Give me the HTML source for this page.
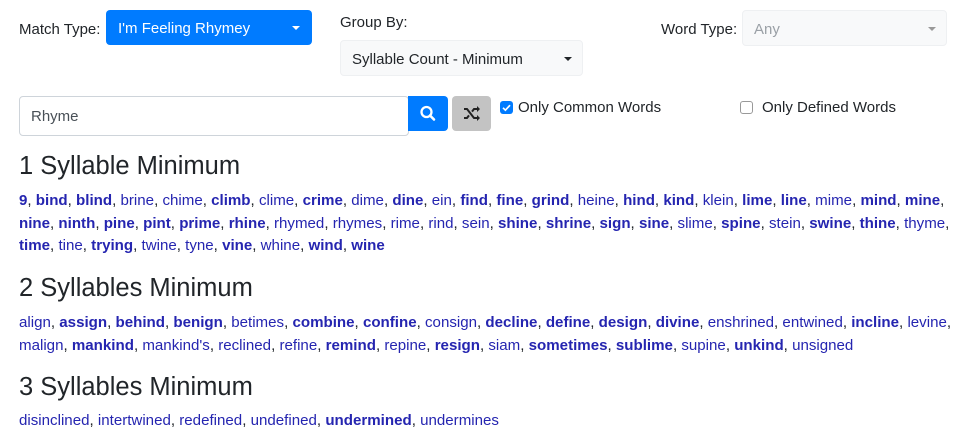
<!DOCTYPE html>
<html><head><meta charset="utf-8"><style>
body{margin:0;width:960px;height:439px;overflow:hidden;background:#fff;font-family:"Liberation Sans",Arial,sans-serif;color:#212529;position:relative}
.a{position:absolute}
.lbl{font-size:15px;white-space:nowrap}
.sel{border-radius:4px;font-size:15px;box-sizing:border-box;white-space:nowrap}
.caret{position:absolute;width:0;height:0;border-left:4px solid transparent;border-right:4px solid transparent;border-top:4px solid}
h2{font-weight:400;font-size:25.5px;margin:0;position:absolute;left:19px;color:#212529;white-space:nowrap}
.w{position:absolute;left:19px;width:945px;font-size:15.1px;line-height:22.5px;color:#212529;white-space:nowrap}
.w a{color:#2525b0;text-decoration:none}
.w b{color:#2525b0}
</style></head><body>
<div class="a lbl" style="left:19px;top:21px">Match Type:</div>
<div class="a sel" style="left:106px;top:10px;width:206px;height:35px;background:#007bff;color:#fff;padding:10px 12px">I'm Feeling Rhymey<span class="caret" style="left:186px;top:16px;color:#fff"></span></div>
<div class="a lbl" style="left:340px;top:14px">Group By:</div>
<div class="a sel" style="left:340px;top:40px;width:243px;height:36px;background:#f8f9fa;border:1px solid #eef0f2;padding:10px 11px">Syllable Count - Minimum<span class="caret" style="left:223px;top:16px;color:#212529"></span></div>
<div class="a lbl" style="left:661px;top:21px">Word Type:</div>
<div class="a sel" style="left:742px;top:10px;width:205px;height:36px;background:#f8f9fa;border:1px solid #eef0f2;color:#9aa0a6;padding:10px 11px">Any<span class="caret" style="left:185px;top:16px;color:#999"></span></div>
<div class="a sel" style="left:19px;top:96px;width:390px;height:40px;border:1px solid #ced4da;padding:11px 11px;color:#495057">Rhyme</div>
<div class="a" style="left:408px;top:96px;width:40px;height:35px;background:#007bff;border-radius:0 4px 4px 0">
<svg width="40" height="35"><circle cx="18.5" cy="16" r="5" fill="none" stroke="#fff" stroke-width="2.3"/><line x1="22" y1="19.5" x2="26" y2="23.5" stroke="#fff" stroke-width="2.6" stroke-linecap="round"/></svg></div>
<div class="a" style="left:452px;top:96px;width:39px;height:35px;background:#c3c3c3;border-radius:4px">
<svg width="39" height="35"><path d="M12 13h3l7 9h4M12 22h3l2-2.6M20 15.6l2-2.6h4" fill="none" stroke="#222" stroke-width="2"/><path d="M25 10l3 3-3 3zM25 19l3 3-3 3z" fill="#222"/></svg></div>
<div class="a" style="left:500px;top:101px;width:13px;height:13px;background:#007bff;border-radius:3px"><svg width="13" height="13"><path d="M3 6.8l2.4 2.4 4.6-5" fill="none" stroke="#fff" stroke-width="1.7"/></svg></div>
<div class="a lbl" style="left:518px;top:99px">Only Common Words</div>
<div class="a" style="left:740px;top:101px;width:11px;height:11px;border:1px solid #999;border-radius:3px"></div>
<div class="a lbl" style="left:762px;top:99px">Only Defined Words</div>

<h2 style="top:152px">1 Syllable Minimum</h2>
<div class="w" style="top:190px"><b>9</b>, <b>bind</b>, <b>blind</b>, <a>brine</a>, <a>chime</a>, <b>climb</b>, <a>clime</a>, <b>crime</b>, <a>dime</a>, <b>dine</b>, <a>ein</a>, <b>find</b>, <b>fine</b>, <b>grind</b>, <a>heine</a>, <b>hind</b>, <b>kind</b>, <a>klein</a>, <b>lime</b>, <b>line</b>, <a>mime</a>, <b>mind</b>, <b>mine</b>,<br><b>nine</b>, <b>ninth</b>, <b>pine</b>, <b>pint</b>, <b>prime</b>, <b>rhine</b>, <a>rhymed</a>, <a>rhymes</a>, <a>rime</a>, <a>rind</a>, <a>sein</a>, <b>shine</b>, <b>shrine</b>, <b>sign</b>, <b>sine</b>, <a>slime</a>, <b>spine</b>, <a>stein</a>, <b>swine</b>, <b>thine</b>, <a>thyme</a>,<br><b>time</b>, <a>tine</a>, <b>trying</b>, <a>twine</a>, <a>tyne</a>, <b>vine</b>, <a>whine</a>, <b>wind</b>, <b>wine</b></div>
<h2 style="top:274px">2 Syllables Minimum</h2>
<div class="w" style="top:312px"><a>align</a>, <b>assign</b>, <b>behind</b>, <b>benign</b>, <a>betimes</a>, <b>combine</b>, <b>confine</b>, <a>consign</a>, <b>decline</b>, <b>define</b>, <b>design</b>, <b>divine</b>, <a>enshrined</a>, <a>entwined</a>, <b>incline</b>, <a>levine</a>,<br><a>malign</a>, <b>mankind</b>, <a>mankind's</a>, <a>reclined</a>, <a>refine</a>, <b>remind</b>, <a>repine</a>, <b>resign</b>, <a>siam</a>, <b>sometimes</b>, <b>sublime</b>, <a>supine</a>, <b>unkind</b>, <a>unsigned</a></div>
<h2 style="top:373px">3 Syllables Minimum</h2>
<div class="w" style="top:410px"><a>disinclined</a>, <a>intertwined</a>, <a>redefined</a>, <a>undefined</a>, <b>undermined</b>, <a>undermines</a></div>
</body></html>
